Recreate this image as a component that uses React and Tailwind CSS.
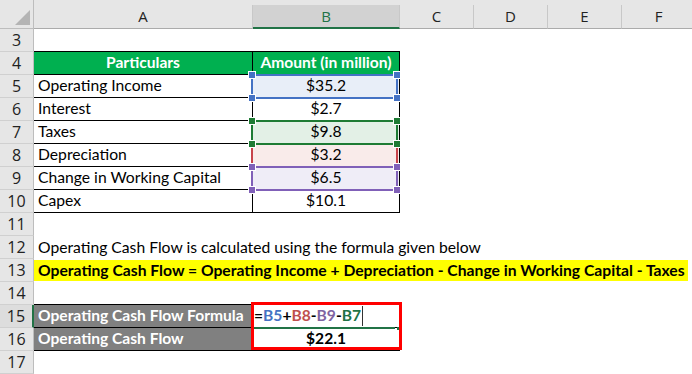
import clsx from 'clsx'

const cellFont = { fontFamily: 'Lato, "Open Sans", sans-serif' }

const columns = [
  { key: 'A', w: 'w-[219px]' },
  { key: 'B', w: 'w-[147px]', selected: true },
  { key: 'C', w: 'w-[74px]' },
  { key: 'D', w: 'w-[74px]' },
  { key: 'E', w: 'w-[74px]' },
  { key: 'F', w: 'w-[74px]' },
]

const items = [
  { n: 5, label: 'Operating Income', value: '$35.2', hl: 'blue' },
  { n: 6, label: 'Interest', value: '$2.7' },
  { n: 7, label: 'Taxes', value: '$9.8', hl: 'green' },
  { n: 8, label: 'Depreciation', value: '$3.2', hl: 'red' },
  { n: 9, label: 'Change in Working Capital', value: '$6.5', hl: 'purple' },
  { n: 10, label: 'Capex', value: '$10.1' },
]

const hlStyles = {
  blue: { fill: 'bg-[#e8eef8]', box: 'border-[#4472c4] z-20', dot: 'bg-[#4472c4]' },
  green: { fill: 'bg-[#e3f0e6]', box: 'border-[#1e7b34] z-20', dot: 'bg-[#1e7b34]' },
  red: { fill: 'bg-[#f9ebea]', box: 'border-[#c8434b] z-10', dot: 'bg-[#c8434b]' },
  purple: { fill: 'bg-[#efedf7]', box: 'border-[#8060b8] z-20', dot: 'bg-[#8060b8]' },
}

function Highlight({ color }) {
  const s = hlStyles[color]
  return (
    <div className={clsx('pointer-events-none absolute left-[-2px] top-[-1px] h-[25px] w-[147px] border-2', s.box)}>
      <span className={clsx('absolute left-[-4px] top-[-4px] h-[6px] w-[6px] outline outline-1 outline-white', s.dot)} />
      <span className={clsx('absolute right-[-4px] top-[-4px] h-[6px] w-[6px] outline outline-1 outline-white', s.dot)} />
      <span className={clsx('absolute left-[-4px] bottom-[-4px] h-[6px] w-[6px] outline outline-1 outline-white', s.dot)} />
      <span className={clsx('absolute right-[-4px] bottom-[-4px] h-[6px] w-[6px] outline outline-1 outline-white', s.dot)} />
    </div>
  )
}

function Row({ n, selected, children }) {
  return (
    <div className="flex h-[23px]">
      <div
        className={clsx(
          'flex w-[34px] shrink-0 items-center justify-center border-b border-b-[#d0d0d0] text-[16px] text-[#222]',
          selected
            ? 'border-r-2 border-r-[#217346] bg-[#dddddd]'
            : 'border-r border-r-[#bdbdbd] bg-[#e6e6e6]'
        )}
        style={{ fontFamily: '"Open Sans", sans-serif' }}
      >
        {n}
      </div>
      {children}
    </div>
  )
}

export default function App() {
  return (
    <div className="relative h-[374px] w-[692px] overflow-hidden bg-white text-[15.7px] text-black" style={cellFont}>
      {/* column headers */}
      <div className="flex h-[29px] bg-[#e6e6e6]">
        <div className="relative w-[34px] shrink-0 border-b border-r border-[#bdbdbd]">
          <svg className="absolute left-0 top-0" width="34" height="29">
            <polygon points="30,10 30,25 15,25" fill="#b4b4b4" />
          </svg>
        </div>
        {columns.map((c) => (
          <div key={c.key} className="flex shrink-0 flex-col pt-[5px]">
            <div
              className={clsx(
                'flex h-[24px] items-center justify-center border-r border-r-[#c8c8c8] text-[15px]',
                c.w,
                c.selected
                  ? 'border-b-2 border-b-[#217346] bg-[#d2d2d2] text-[#217346]'
                  : 'border-b border-b-[#ababab] text-[#222]'
              )}
              style={{ fontFamily: '"Open Sans", sans-serif' }}
            >
              {c.key}
            </div>
          </div>
        ))}
      </div>

      <Row n={3}>
        <div className="w-[219px] border-b border-black" />
        <div className="w-[147px] border-b border-black" />
      </Row>

      <Row n={4}>
        <div className="flex w-[219px] items-center justify-center border-b border-r border-black bg-[#00b050] text-[15.6px] font-bold text-white">
          Particulars
        </div>
        <div className="flex w-[147px] items-center justify-center border-b border-r border-black bg-[#00b050] text-[15.6px] font-bold text-white">
          Amount (in million)
        </div>
      </Row>

      {items.map((it) => (
        <Row key={it.n} n={it.n}>
          <div className="flex w-[219px] items-center border-b border-r border-black pl-[4px]">
            {it.label}
          </div>
          <div
            className={clsx(
              'relative flex w-[147px] items-center justify-center border-b border-r border-black',
              it.hl && hlStyles[it.hl].fill
            )}
          >
            {it.value}
            {it.hl && <Highlight color={it.hl} />}
          </div>
        </Row>
      ))}

      <Row n={11} />

      <Row n={12}>
        <div className="flex items-center whitespace-nowrap pl-[4px]">
          Operating Cash Flow is calculated using the formula given below
        </div>
      </Row>

      <Row n={13}>
        <div className="flex items-end pb-[1px]">
          <div className="flex h-[21px] w-[654px] items-center whitespace-nowrap bg-[#ffff00] pl-[4px] text-[15.7px] font-bold">
            Operating Cash Flow = Operating Income + Depreciation - Change in Working Capital - Taxes
          </div>
        </div>
      </Row>

      <Row n={14}>
        <div className="w-[219px] border-b border-black" />
        <div className="w-[147px] border-b border-black" />
      </Row>

      <Row n={15} selected>
        <div className="flex w-[219px] items-center border-b border-r border-black bg-[#808080] pl-[4px] text-[15.6px] font-bold text-white">
          Operating Cash Flow Formula
        </div>
        <div className="relative flex w-[147px] items-center border-b border-r border-black pl-[1px] text-[15.6px] font-bold">
          <span>=</span>
          <span className="text-[#4472c4]">B5</span>
          <span>+</span>
          <span className="text-[#c0504d]">B8</span>
          <span>-</span>
          <span className="text-[#8064a2]">B9</span>
          <span>-</span>
          <span className="text-[#217346]">B7</span>
          <span className="ml-[1px] h-[20px] w-px bg-[#333]" />
          <div className="absolute left-0 top-[22px] h-[2px] w-[142px] bg-[#217346]" />
          <div className="absolute left-[144px] top-[22px] h-[3px] w-[2px] bg-[#217346]" />
          <div className="pointer-events-none absolute left-[-2px] top-[-3px] z-30 h-[48px] w-[151px] border-[3px] border-[#ff0000]" />
        </div>
      </Row>

      <Row n={16}>
        <div className="flex w-[219px] items-center border-b border-r border-black bg-[#808080] pl-[4px] text-[15.6px] font-bold text-white">
          Operating Cash Flow
        </div>
        <div className="flex w-[147px] items-center justify-center border-b border-r border-black text-[15.6px] font-bold">
          $22.1
        </div>
      </Row>

      <Row n={17} />
    </div>
  )
}
